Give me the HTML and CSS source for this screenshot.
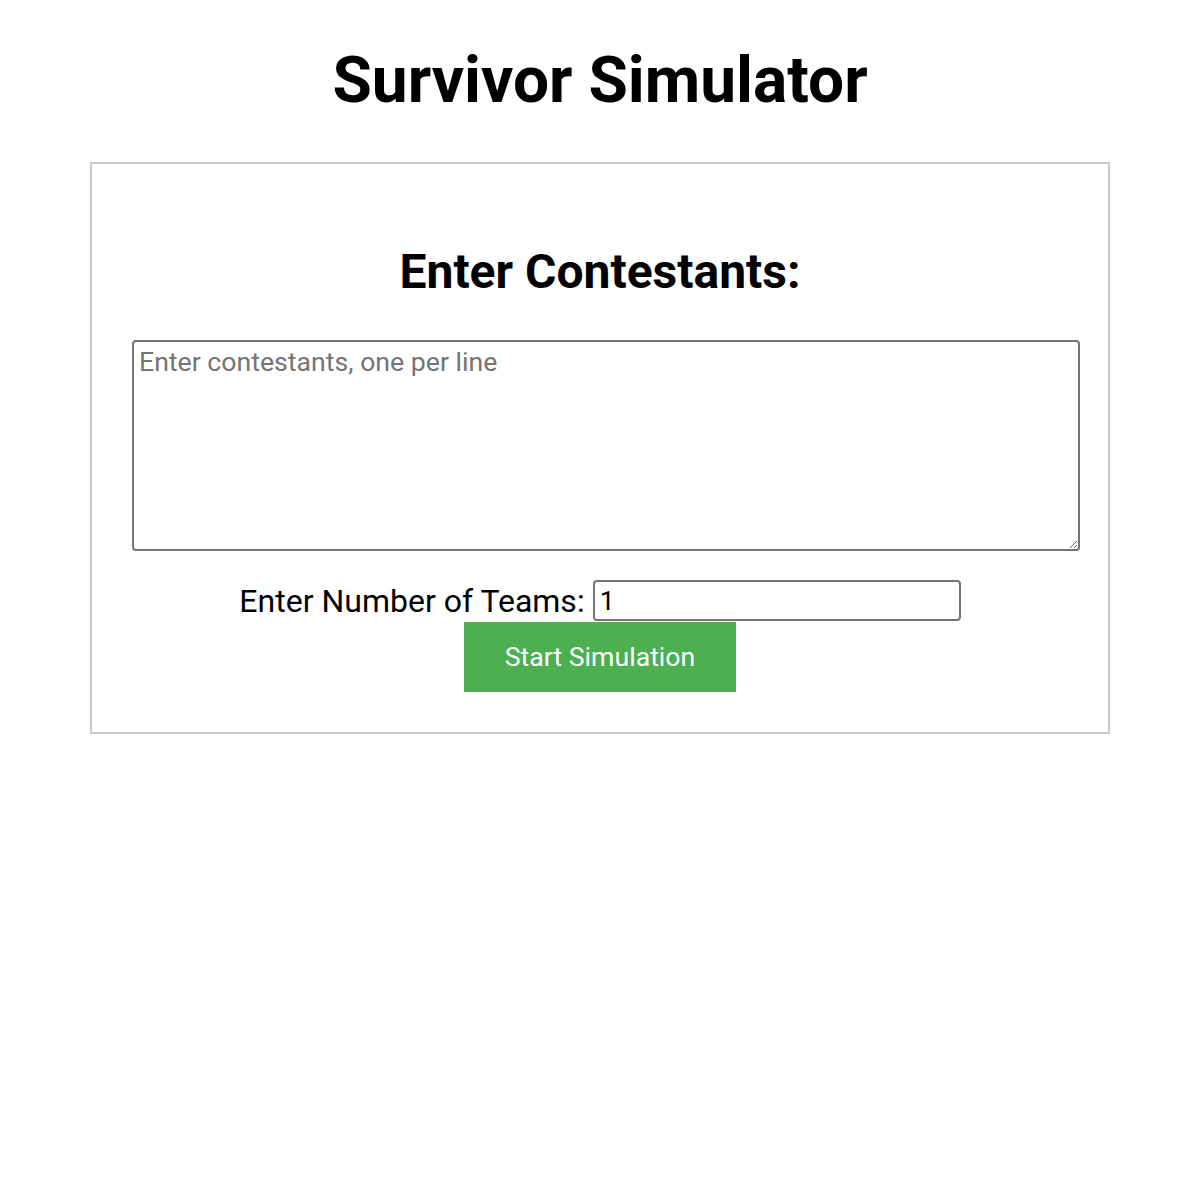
FILE: index.html
```html
<!DOCTYPE html>
<html lang="en">
<head>
    <meta charset="UTF-8">
    <meta name="viewport" content="width=device-width, initial-scale=1.0">
    <title>Survivor Simulator</title>
    <link rel="stylesheet" href="styles.css">
</head>
<body>
    <h1>Survivor Simulator</h1>
    <div class="container">
        <h2>Enter Contestants:</h2>
        <textarea id="contestants" placeholder="Enter contestants, one per line"></textarea>
        <div class="teams-row">
            <label for="teams">Enter Number of Teams:</label>
            <input type="number" id="teams" value="1" min="1">
        </div>
        <div class="action-buttons">
            <button class="start">Start Simulation</button>
        </div>
    </div>
</body>
</html>
```

FILE: styles.css
```css
body {
    font-family: Roboto, "Liberation Sans", Arial, sans-serif;
    margin: 0;
    padding: 0;
    background-color: #fff;
    color: #000;
}
h1 {
    text-align: center;
    font-size: 64px;
    font-weight: bold;
    margin: 43px 0 44px;
}
.container {
    box-sizing: border-box;
    width: 1020px;
    margin: 0 auto;
    padding: 40px;
    border: 2px solid #ccc;
}
h2 {
    text-align: center;
    font-size: 48px;
    font-weight: bold;
    margin: 39px 0 40px;
}
textarea {
    display: block;
    box-sizing: border-box;
    width: calc(100% + 12px);
    height: 211px;
    margin: 0;
    padding: 4px 5px;
    border: 2px solid #767676;
    border-radius: 4px;
    font-family: inherit;
    font-size: 26.67px;
    resize: vertical;
}
textarea::placeholder {
    color: #757575;
}
.teams-row {
    display: flex;
    justify-content: center;
    align-items: center;
    gap: 8px;
    margin-top: 29px;
}
label {
    font-size: 32px;
}
input {
    box-sizing: border-box;
    width: 368px;
    height: 41px;
    margin: 0;
    padding: 0 5px;
    border: 2px solid #767676;
    border-radius: 4px;
    font-family: inherit;
    font-size: 26.67px;
    color: #000;
}
input::-webkit-outer-spin-button,
input::-webkit-inner-spin-button {
    -webkit-appearance: none;
    margin: 0;
}
.action-buttons {
    display: flex;
    justify-content: center;
    margin-top: 1px;
}
button {
    height: 70px;
    padding: 0 41px;
    background-color: #4CAF50;
    color: white;
    border: none;
    font-family: inherit;
    font-size: 26.67px;
    cursor: pointer;
}
```
